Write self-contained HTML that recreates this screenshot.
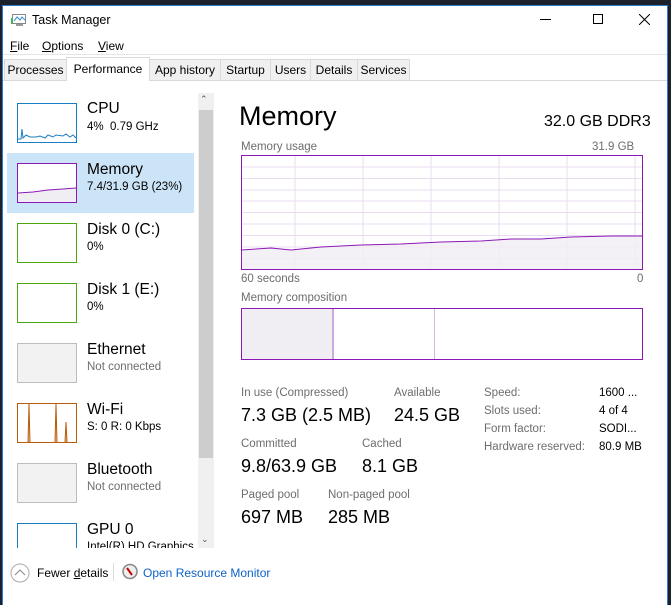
<!DOCTYPE html>
<html><head><meta charset="utf-8"><style>
*{margin:0;padding:0;box-sizing:border-box}
body{width:671px;height:597px;background:#1b222c;overflow:hidden;font-family:"Liberation Sans",sans-serif;position:relative}
.win{position:absolute;left:2px;top:5px;width:666px;height:600px;background:#fff;border:1px solid #2b7bd0;border-bottom:none}
.a{position:absolute;white-space:nowrap}
.g{color:#6d6d6d;font-size:11.5px}
.v{font-size:18px;color:#000}
.tab{position:absolute;top:59px;height:22px;background:#f0f0f0;border:1px solid #d9d9d9;font-size:12px;padding:3px 0 0;white-space:nowrap;text-align:center;overflow:hidden}
.th{position:absolute;left:17px;width:60px;height:40px;border:1px solid}
.nm{position:absolute;left:87px;font-size:15.5px;color:#000}
.sb{position:absolute;left:87px;font-size:11.5px;color:#000}
</style></head><body>
<div class="win"></div>
<!-- title -->
<svg class="a" style="left:11px;top:13px" width="17" height="15"><rect x="1.5" y="1.5" width="13" height="9" fill="#fff" stroke="#888"/><path d="M3 8l3-4 3 3 2-3 3 3" fill="none" stroke="#2a8bd6"/><rect x="5" y="11" width="7" height="2" fill="#999"/><rect x="0" y="5" width="2" height="6" fill="#4caf50"/></svg>
<div class="a" style="left:32px;top:13px;font-size:12.5px">Task Manager</div>
<div class="a" style="left:540px;top:19px;width:11px;height:1px;background:#000"></div>
<div class="a" style="left:593px;top:14px;width:10px;height:10px;border:1px solid #000"></div>
<svg class="a" style="left:639px;top:14px" width="11" height="11"><path d="M0 0L11 11M11 0L0 11" stroke="#000"/></svg>
<!-- menu -->
<div class="a" style="left:10px;top:39px;font-size:12px"><u>F</u>ile</div>
<div class="a" style="left:42px;top:39px;font-size:12px"><u>O</u>ptions</div>
<div class="a" style="left:98px;top:39px;font-size:12px"><u>V</u>iew</div>
<div class="a" style="left:3px;top:54px;width:664px;height:1px;background:#e6e6e6"></div>
<div class="a" style="left:3px;top:80px;width:664px;height:1px;background:#d9d9d9"></div>
<div class="tab" style="left:4px;width:63px">Processes</div>
<div class="tab" style="left:66px;top:57px;height:24px;width:84px;background:#fff;border-bottom:none;padding-top:4px">Performance</div>
<div class="tab" style="left:149px;width:72px">App history</div>
<div class="tab" style="left:220px;width:51px">Startup</div>
<div class="tab" style="left:270px;width:41px">Users</div>
<div class="tab" style="left:310px;width:48px">Details</div>
<div class="tab" style="left:357px;width:53px">Services</div>
<!-- left list -->
<div class="a" style="left:0;top:92px;width:214px;height:456px;overflow:hidden">
<div class="a" style="left:7px;top:61px;width:187px;height:60px;background:#cce4f7"></div>
<div class="th" style="top:11px;border-color:#1a7ec2;background:#fff"><svg width="58" height="38"><path d="M0 35L3 35L4 25L5 34L8 31L12 33L18 33L22 32L27 34L30 31L35 33L38 31L45 32L48 30L52 33L55 31L58 34" fill="none" stroke="#1a7ec2"/></svg></div>
<div class="nm" style="top:8px">CPU</div><div class="sb" style="top:29px">4%&nbsp; 0.79 GHz</div>
<div class="th" style="top:71px;border-color:#8b18b6;background:#fff"><svg width="58" height="38"><path d="M0 29L15 28L30 26L45 25L58 24L58 38L0 38Z" fill="#f1eef3"/><path d="M0 29L15 28L30 26L45 25L58 24" fill="none" stroke="#8b18b6"/></svg></div>
<div class="nm" style="top:69px">Memory</div><div class="sb" style="top:89px">7.4/31.9 GB (23%)</div>
<div class="th" style="top:131px;border-color:#4da60c"></div>
<div class="nm" style="top:129px">Disk 0 (C:)</div><div class="sb" style="top:149px">0%</div>
<div class="th" style="top:191px;border-color:#4da60c"></div>
<div class="nm" style="top:189px">Disk 1 (E:)</div><div class="sb" style="top:209px">0%</div>
<div class="th" style="top:251px;border-color:#bdbdbd;background:#f2f2f2"></div>
<div class="nm" style="top:249px">Ethernet</div><div class="sb" style="top:269px;color:#6d6d6d">Not connected</div>
<div class="th" style="top:311px;border-color:#b85c0a;background:#fff"><svg width="58" height="38"><path d="M10 38L11 0L12 38M37 38L38 0L39 38M47 38L48 18L49 38" fill="#f0c8a0" stroke="#b85c0a" stroke-width="1"/></svg></div>
<div class="nm" style="top:309px">Wi-Fi</div><div class="sb" style="top:329px">S: 0 R: 0 Kbps</div>
<div class="th" style="top:371px;border-color:#bdbdbd;background:#f2f2f2"></div>
<div class="nm" style="top:369px">Bluetooth</div><div class="sb" style="top:389px;color:#6d6d6d">Not connected</div>
<div class="th" style="top:431px;border-color:#1a7ec2"></div>
<div class="nm" style="top:429px">GPU 0</div><div class="sb" style="top:449px">Intel(R) HD Graphics</div>
</div>
<div class="a" style="left:198px;top:93px;width:16px;height:455px;background:#f0f0f0"></div>
<div class="a" style="left:199px;top:110px;width:14px;height:348px;background:#cdcdcd"></div>
<div class="a" style="left:200px;top:94px;font-size:9px;color:#555">&#8963;</div>
<div class="a" style="left:201px;top:534px;font-size:9px;color:#555">&#8964;</div>
<!-- right -->
<div class="a" style="left:239px;top:101px;font-size:27px">Memory</div>
<div class="a" style="left:544px;top:113px;font-size:16px">32.0 GB DDR3</div>
<div class="a g" style="left:241px;top:141px">Memory usage</div>
<div class="a g" style="left:592px;top:141px">31.9 GB</div>
<svg class="a" style="left:241px;top:155px" width="402" height="115">
<g stroke="#eadcf0" fill="none">
<path d="M0 12H402M0 23.5H402M0 35H402M0 46H402M0 57.5H402M0 69H402M0 80.5H402M0 92H402M0 103.5H402"/>
<path d="M54 0V115M122 0V115M190 0V115M258 0V115M326 0V115M394 0V115"/></g>
<path d="M0 95L30 93L50 95L80 92L120 90L160 89L200 87L240 86L270 84L300 84L330 82L370 81L402 81V115H0Z" fill="#f1eef3" opacity=".85"/>
<path d="M0 95L30 93L50 95L80 92L120 90L160 89L200 87L240 86L270 84L300 84L330 82L370 81L402 81" fill="none" stroke="#8b18b6"/>
<rect x=".5" y=".5" width="401" height="114" fill="none" stroke="#8b18b6"/></svg>
<div class="a g" style="left:241px;top:273px">60 seconds</div>
<div class="a g" style="left:637px;top:273px">0</div>
<div class="a g" style="left:241px;top:292px">Memory composition</div>
<div class="a" style="left:241px;top:308px;width:402px;height:52px;border:1px solid #8b18b6"></div>
<div class="a" style="left:242px;top:309px;width:92px;height:50px;background:#f1eef3;border-right:2px solid #cfa8df"></div>
<div class="a" style="left:434px;top:309px;width:1px;height:50px;background:#d6b4e4"></div>
<div class="a g" style="left:241px;top:387px">In use (Compressed)</div>
<div class="a v" style="left:241px;top:405px">7.3 GB (2.5 MB)</div>
<div class="a g" style="left:394px;top:387px">Available</div>
<div class="a v" style="left:394px;top:405px">24.5 GB</div>
<div class="a g" style="left:241px;top:438px">Committed</div>
<div class="a v" style="left:241px;top:456px">9.8/63.9 GB</div>
<div class="a g" style="left:362px;top:438px">Cached</div>
<div class="a v" style="left:362px;top:456px">8.1 GB</div>
<div class="a g" style="left:241px;top:489px">Paged pool</div>
<div class="a v" style="left:241px;top:507px">697 MB</div>
<div class="a g" style="left:328px;top:489px">Non-paged pool</div>
<div class="a v" style="left:328px;top:507px">285 MB</div>
<div class="a g" style="left:484px;top:384px;line-height:18px">Speed:<br>Slots used:<br>Form factor:<br>Hardware reserved:</div>
<div class="a" style="left:599px;top:384px;font-size:11.5px;line-height:18px">1600 ...<br>4 of 4<br>SODI...<br>80.9 MB</div>
<!-- footer -->
<svg class="a" style="left:10px;top:563px" width="20" height="20"><circle cx="10" cy="10" r="9" fill="#fff" stroke="#aaa"/><path d="M5 12L10 7L15 12" fill="none" stroke="#888"/></svg>
<div class="a" style="left:37px;top:566px;font-size:12px">Fewer <u>d</u>etails</div>
<div class="a" style="left:113px;top:563px;width:1px;height:18px;background:#ddd"></div>
<svg class="a" style="left:122px;top:563px" width="16" height="17"><circle cx="8" cy="8.5" r="7" fill="#eee" stroke="#888" stroke-width="1.5"/><path d="M5 5L10 12" stroke="#c00" stroke-width="2"/></svg>
<div class="a" style="left:143px;top:566px;font-size:12px;color:#0d63c9">Open Resource Monitor</div>
</body></html>
